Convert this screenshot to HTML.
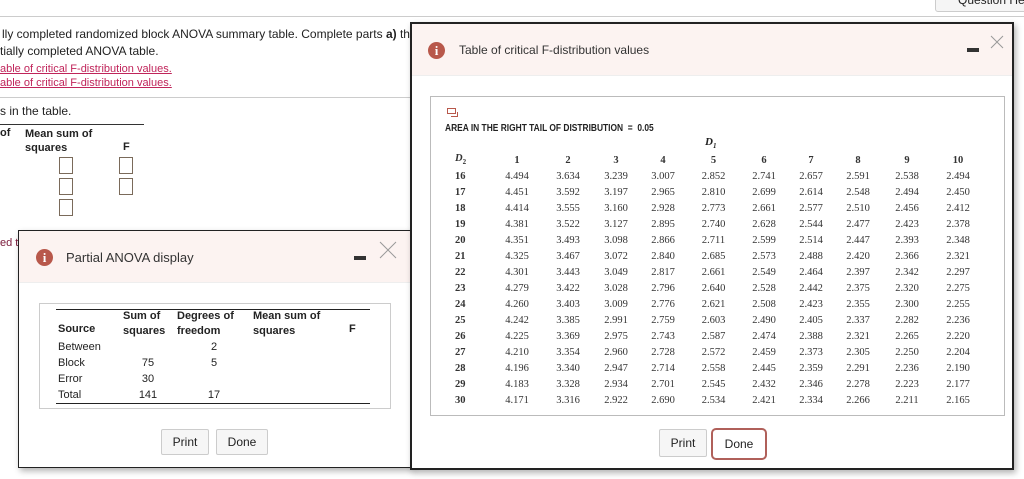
<!DOCTYPE html>
<html><head><meta charset="utf-8"><style>
*{box-sizing:border-box;margin:0;padding:0}
body{width:1024px;height:479px;overflow:hidden;background:#fff;font-family:"Liberation Sans",sans-serif;font-size:12px;color:#222;position:relative}
.a{position:absolute}
.hdr{background:#fcf3f1;border-bottom:1px solid #eee}
.ic{width:17px;height:17px;border-radius:50%;background:#b8584b;color:#fff;font-weight:bold;font-family:"Liberation Serif",serif;font-size:13px;text-align:center;line-height:17px}
.btn{border:1px solid #ccc;background:#f6f6f6;border-radius:2px;font-size:12px;text-align:center}
.ft{border-collapse:collapse;font-family:"Liberation Serif",serif;font-size:10.5px;color:#333}
.ft td{height:16px;text-align:center;padding:0}
.ft td:first-child{text-align:left;padding-left:10px;font-weight:bold}
.box{width:14px;height:17px;border:1px solid #7a6a5a;position:absolute}
</style></head><body>
<div class="a" style="left:0;top:16px;width:1024px;height:1px;background:#ccc"></div>
<div class="a" style="left:935px;top:-8px;width:100px;height:20px;border:1px solid #ccc;border-radius:3px;background:#f5f5f5;font-size:12px;padding-left:22px;line-height:14px">Question He</div>
<div class="a" style="left:2px;top:27px;font-size:12px">lly completed randomized block ANOVA summary table. Complete parts <b>a)</b> throu</div>
<div class="a" style="left:0;top:44px;font-size:12px">tially completed ANOVA table.</div>
<div class="a" style="left:0;top:63px;font-size:11px;color:#c0245a;text-decoration:underline">able of critical F-distribution values.</div>
<div class="a" style="left:0;top:77px;font-size:11px;color:#c0245a;text-decoration:underline">able of critical F-distribution values.</div>
<div class="a" style="left:0;top:97px;width:410px;height:1px;background:#ccc"></div>
<div class="a" style="left:0;top:104px;font-size:12px">s in the table.</div>
<div class="a" style="left:0;top:124px;width:144px;height:1px;background:#333"></div>
<div class="a" style="left:0;top:127px;font-size:11px;font-weight:bold">of</div>
<div class="a" style="left:25px;top:127px;font-size:11px;font-weight:bold;line-height:14px">Mean sum of<br>squares</div>
<div class="a" style="left:123px;top:141px;font-size:11px;font-weight:bold">F</div>
<div class="box" style="left:59px;top:157px"></div><div class="box" style="left:59px;top:178px"></div><div class="box" style="left:59px;top:199px"></div>
<div class="box" style="left:119px;top:157px"></div><div class="box" style="left:119px;top:178px"></div>
<div class="a" style="left:0;top:237px;font-size:11px;color:#7a1a3a">ed t</div>

<div class="a" style="left:18px;top:230px;width:394px;height:238px;border:1px solid #222;background:#fff;box-shadow:2px 3px 6px rgba(0,0,0,.3)">
 <div class="hdr a" style="left:0;top:0;width:392px;height:52px"></div>
 <div class="a ic" style="left:17px;top:18px">i</div>
 <div class="a" style="left:47px;top:19px;font-size:13px;color:#333">Partial ANOVA display</div>
 <div class="a" style="left:335px;top:25px;width:12px;height:4px;background:#333"></div>
 <svg class="a" style="left:360px;top:10px" width="18" height="18"><path d="M1 1L17 17M17 1L1 17" stroke="#999" stroke-width="1"/></svg>
 <div class="a" style="left:20px;top:72px;width:352px;height:106px;border:1px solid #ccc"></div>
 <div class="a" style="left:37px;top:78px;width:314px;height:1px;background:#222"></div>
 <div class="a" style="left:37px;top:172px;width:314px;height:1px;background:#222"></div>
 <div class="a" style="left:39px;top:92px;font-size:11px;font-weight:bold">Source</div>
 <div class="a" style="left:104px;top:78px;font-size:11px;font-weight:bold;line-height:15px">Sum of<br>squares</div>
 <div class="a" style="left:158px;top:78px;font-size:11px;font-weight:bold;line-height:15px">Degrees of<br>freedom</div>
 <div class="a" style="left:234px;top:78px;font-size:11px;font-weight:bold;line-height:15px">Mean sum of<br>squares</div>
 <div class="a" style="left:330px;top:92px;font-size:11px;font-weight:bold">F</div>
 <div class="a" style="left:39px;top:108px;font-size:11px;line-height:16px">Between<br>Block<br>Error<br>Total</div>
 <div class="a" style="left:114px;top:124px;font-size:11px;line-height:16px;text-align:center;width:30px">75<br>30<br>141</div>
 <div class="a" style="left:180px;top:108px;font-size:11px;line-height:16px;text-align:center;width:30px">2<br>5<br><br>17</div>
 <div class="a btn" style="left:142px;top:198px;width:48px;height:26px;line-height:24px">Print</div>
 <div class="a btn" style="left:197px;top:198px;width:52px;height:26px;line-height:24px">Done</div>
</div>

<div class="a" style="left:410px;top:22px;width:604px;height:448px;border:2px solid #222;background:#fff;box-shadow:2px 3px 6px rgba(0,0,0,.3)">
 <div class="hdr a" style="left:0;top:0;width:600px;height:52px"></div>
 <div class="a ic" style="left:16px;top:18px">i</div>
 <div class="a" style="left:47px;top:19px;font-size:12px;color:#333">Table of critical F-distribution values</div>
 <div class="a" style="left:555px;top:24px;width:12px;height:4px;background:#333"></div>
 <svg class="a" style="left:578px;top:11px" width="14" height="14"><path d="M1 1L13 13M13 1L1 13" stroke="#999" stroke-width="1"/></svg>
 <div class="a" style="left:18px;top:72px;width:575px;height:320px;border:1px solid #bbb"></div>
 <div class="a" style="left:35px;top:84px;width:9px;height:6px;border:1.5px solid #b8584b"></div>
 <div class="a" style="left:39px;top:88px;width:7px;height:5px;border-right:1.5px solid #b8584b;border-bottom:1.5px solid #b8584b"></div>
 <div class="a" style="left:33px;top:99px;font-size:10px;font-weight:bold;transform:scaleX(.84);transform-origin:left;white-space:nowrap">AREA IN THE RIGHT TAIL OF DISTRIBUTION &nbsp;= &nbsp;0.05</div>
 <div class="a" style="left:293px;top:112px;font-family:'Liberation Serif',serif;font-style:italic;font-weight:bold;font-size:11px">D<sub style="font-size:7px">1</sub></div>
 <table class="ft a" style="left:33px;top:128px">
 <colgroup><col style="width:46px"><col style="width:52px"><col style="width:50px"><col style="width:46px"><col style="width:48px"><col style="width:53px"><col style="width:48px"><col style="width:46px"><col style="width:48px"><col style="width:50px"><col style="width:52px"></colgroup>
 <tr style="font-weight:bold"><td><i>D</i><sub style="font-size:7px">2</sub></td><td><b>1</b></td><td><b>2</b></td><td><b>3</b></td><td><b>4</b></td><td><b>5</b></td><td><b>6</b></td><td><b>7</b></td><td><b>8</b></td><td><b>9</b></td><td><b>10</b></td></tr>
 <tr><td>16</td><td>4.494</td><td>3.634</td><td>3.239</td><td>3.007</td><td>2.852</td><td>2.741</td><td>2.657</td><td>2.591</td><td>2.538</td><td>2.494</td></tr>
 <tr><td>17</td><td>4.451</td><td>3.592</td><td>3.197</td><td>2.965</td><td>2.810</td><td>2.699</td><td>2.614</td><td>2.548</td><td>2.494</td><td>2.450</td></tr>
 <tr><td>18</td><td>4.414</td><td>3.555</td><td>3.160</td><td>2.928</td><td>2.773</td><td>2.661</td><td>2.577</td><td>2.510</td><td>2.456</td><td>2.412</td></tr>
 <tr><td>19</td><td>4.381</td><td>3.522</td><td>3.127</td><td>2.895</td><td>2.740</td><td>2.628</td><td>2.544</td><td>2.477</td><td>2.423</td><td>2.378</td></tr>
 <tr><td>20</td><td>4.351</td><td>3.493</td><td>3.098</td><td>2.866</td><td>2.711</td><td>2.599</td><td>2.514</td><td>2.447</td><td>2.393</td><td>2.348</td></tr>
 <tr><td>21</td><td>4.325</td><td>3.467</td><td>3.072</td><td>2.840</td><td>2.685</td><td>2.573</td><td>2.488</td><td>2.420</td><td>2.366</td><td>2.321</td></tr>
 <tr><td>22</td><td>4.301</td><td>3.443</td><td>3.049</td><td>2.817</td><td>2.661</td><td>2.549</td><td>2.464</td><td>2.397</td><td>2.342</td><td>2.297</td></tr>
 <tr><td>23</td><td>4.279</td><td>3.422</td><td>3.028</td><td>2.796</td><td>2.640</td><td>2.528</td><td>2.442</td><td>2.375</td><td>2.320</td><td>2.275</td></tr>
 <tr><td>24</td><td>4.260</td><td>3.403</td><td>3.009</td><td>2.776</td><td>2.621</td><td>2.508</td><td>2.423</td><td>2.355</td><td>2.300</td><td>2.255</td></tr>
 <tr><td>25</td><td>4.242</td><td>3.385</td><td>2.991</td><td>2.759</td><td>2.603</td><td>2.490</td><td>2.405</td><td>2.337</td><td>2.282</td><td>2.236</td></tr>
 <tr><td>26</td><td>4.225</td><td>3.369</td><td>2.975</td><td>2.743</td><td>2.587</td><td>2.474</td><td>2.388</td><td>2.321</td><td>2.265</td><td>2.220</td></tr>
 <tr><td>27</td><td>4.210</td><td>3.354</td><td>2.960</td><td>2.728</td><td>2.572</td><td>2.459</td><td>2.373</td><td>2.305</td><td>2.250</td><td>2.204</td></tr>
 <tr><td>28</td><td>4.196</td><td>3.340</td><td>2.947</td><td>2.714</td><td>2.558</td><td>2.445</td><td>2.359</td><td>2.291</td><td>2.236</td><td>2.190</td></tr>
 <tr><td>29</td><td>4.183</td><td>3.328</td><td>2.934</td><td>2.701</td><td>2.545</td><td>2.432</td><td>2.346</td><td>2.278</td><td>2.223</td><td>2.177</td></tr>
 <tr><td>30</td><td>4.171</td><td>3.316</td><td>2.922</td><td>2.690</td><td>2.534</td><td>2.421</td><td>2.334</td><td>2.266</td><td>2.211</td><td>2.165</td></tr>
 </table>
 <div class="a btn" style="left:247px;top:405px;width:48px;height:28px;line-height:26px">Print</div>
 <div class="a btn" style="left:299px;top:404px;width:56px;height:32px;line-height:28px;border:2px solid #b0605a;border-radius:5px;background:#fff">Done</div>
</div>
</body></html>
